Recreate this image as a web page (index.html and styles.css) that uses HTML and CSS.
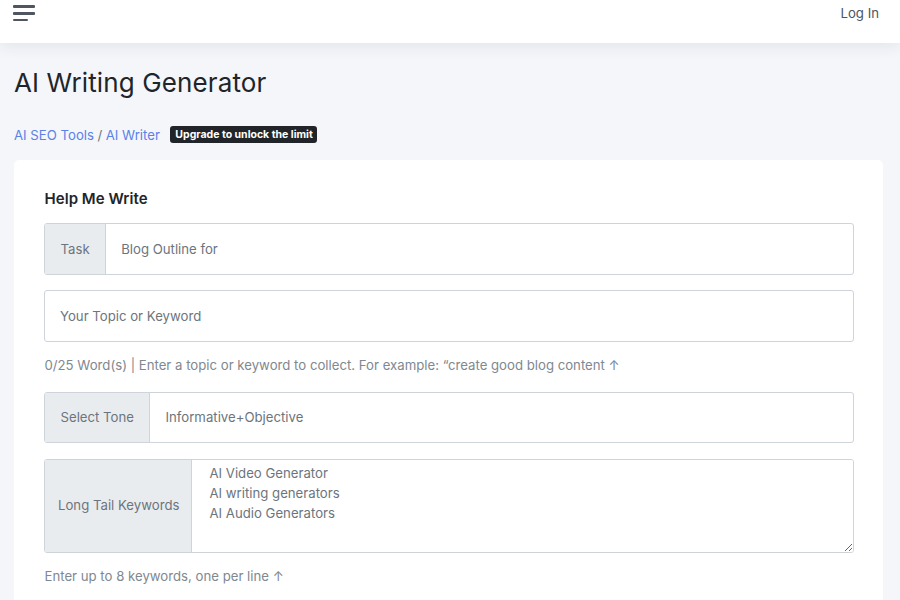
FILE: index.html
```html
<!DOCTYPE html>
<html>

<head>
    <link rel="stylesheet" href="styles.css">
</head>

<body>

    <header class="topbar">
        <a href="#" class="menu-btn">
            <span class="menu-line"></span>
            <span class="menu-line"></span>
            <span class="menu-line menu-line-short"></span>
        </a>
        <a href="#" class="login-link">Log In</a>
    </header>

    <main class="page">
        <h1 class="page-title">AI Writing Generator</h1>

        <div class="crumbs">
            <a href="#" class="crumb-link">AI SEO Tools</a>
            <span class="crumb-sep">/</span>
            <a href="#" class="crumb-link">AI Writer</a>
            <span class="upgrade-badge">Upgrade to unlock the limit</span>
        </div>

        <section class="card">
            <h2 class="card-title">Help Me Write</h2>

            <div class="field field-task">
                <span class="field-label">Task</span>
                <div class="field-value">Blog Outline for</div>
            </div>

            <div class="field field-topic">
                <div class="field-value">Your Topic or Keyword</div>
            </div>
            <p class="hint hint-topic">0/25 Word(s) | Enter a topic or keyword to collect. For example: “create good blog content ↑</p>

            <div class="field field-tone">
                <span class="field-label">Select Tone</span>
                <div class="field-value">Informative+Objective</div>
            </div>

            <div class="field field-keywords">
                <span class="field-label">Long Tail Keywords</span>
                <textarea class="field-area" spellcheck="false">AI Video Generator
AI writing generators
AI Audio Generators</textarea>
            </div>
            <p class="hint hint-keywords">Enter up to 8 keywords, one per line ↑</p>
        </section>
    </main>

</body>

</html>
```

FILE: styles.css
```css
* {
    box-sizing: border-box;
}

html,
body {
    height: 100%;
}

body {
    margin: 0;
    overflow: hidden;
    background: #f4f6fa;
    font-family: Inter, "Liberation Sans", sans-serif;
    color: #6c757d;
}

.topbar {
    height: 43px;
    background: #fff;
    display: flex;
    justify-content: space-between;
    align-items: flex-start;
    padding: 5px 21px 0 12.5px;
    box-shadow: 0 3px 16px rgba(30, 40, 60, 0.09);
}

.menu-btn {
    width: 22px;
    display: flex;
    flex-direction: column;
    gap: 4px;
}

.menu-line {
    height: 3px;
    background: #4f5660;
    border-radius: 1px;
}

.menu-line-short {
    width: 15px;
    height: 2px;
}

.login-link {
    font-size: 13.2px;
    line-height: 16px;
    color: #4a5562;
    text-decoration: none;
}

.page {
    padding: 0 17px 0 14px;
}

.page-title {
    margin: 24px 0 0;
    font-size: 26px;
    line-height: 32px;
    font-weight: 400;
    letter-spacing: 0.12px;
    color: #212529;
}

.crumbs {
    margin-top: 27px;
    display: flex;
    align-items: center;
    height: 17px;
    font-size: 13.2px;
}

.crumb-link {
    color: #5b82e8;
    text-decoration: none;
}

.crumb-sep {
    margin: 0 3.5px;
    color: #6c757d;
}

.upgrade-badge {
    margin-left: 10.5px;
    height: 17px;
    padding: 0 4.5px 0 5px;
    display: flex;
    align-items: center;
    background: #212529;
    border-radius: 3px;
    color: #fff;
    font-size: 10.5px;
    font-weight: 700;
}

.card {
    margin-top: 17px;
    height: 460px;
    padding: 30px;
    background: #fff;
    border-radius: 5px;
}

.card-title {
    margin: 0;
    padding-left: 0.5px;
    font-size: 15px;
    line-height: 18px;
    font-weight: 600;
    letter-spacing: 0.05px;
    color: #212529;
}

.field {
    display: flex;
    width: 810px;
    border: 1px solid #ced4da;
    border-radius: 3px;
    font-size: 13.2px;
    overflow: hidden;
}

.field-task {
    margin-top: 15px;
    height: 52px;
}

.field-topic {
    margin-top: 15px;
    height: 52px;
}

.field-tone {
    margin-top: 18px;
    height: 51px;
}

.field-keywords {
    margin-top: 16px;
    height: 94px;
}

.field-topic .field-value,
.field-tone .field-value,
.field-tone .field-label {
    padding-bottom: 1px;
}

.field-label {
    display: flex;
    align-items: center;
    padding: 0 15.5px;
    background: #e9ecef;
    border-right: 1px solid #ced4da;
    white-space: nowrap;
}

.field-keywords .field-label {
    padding: 0 12px 2px 13px;
}

.field-value {
    flex: 1;
    display: flex;
    align-items: center;
    padding: 0 15px;
}

.field-area {
    flex: 1;
    display: block;
    border: 0;
    outline: 0;
    padding: 3px 17px;
    font-family: inherit;
    font-size: 13.2px;
    line-height: 20px;
    color: #6c757d;
    resize: vertical;
}

.hint {
    margin: 0;
    padding-left: 0.5px;
    font-size: 13.2px;
    line-height: 18px;
    color: #808890;
}

.hint-topic {
    margin-top: 14px;
}

.hint-keywords {
    margin-top: 14px;
}
```
